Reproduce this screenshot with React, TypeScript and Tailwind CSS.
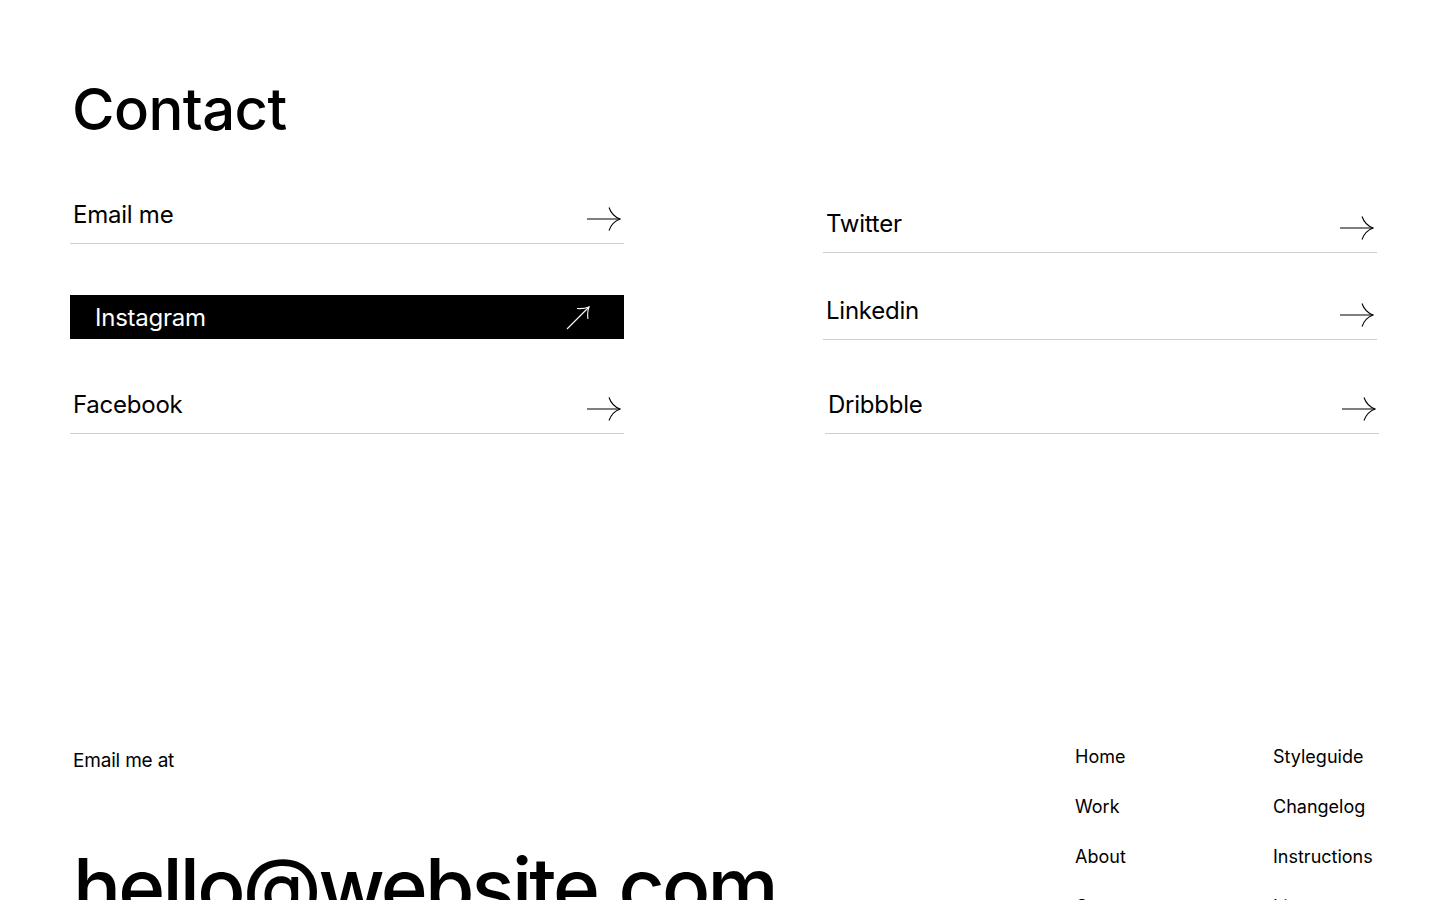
import React from 'react';

interface LinkRow {
  label: string;
  active?: boolean;
  className?: string;
}

const ArrowRight: React.FC<{ className?: string }> = ({ className }) => (
  <svg viewBox="0 0 34 26" width="34" height="26" fill="none" stroke="currentColor" strokeWidth="1.1" className={className}>
    <path d="M0 13 H33" />
    <path d="M22 1.5 Q25 10 33 13 Q25 16 22 24.5" />
  </svg>
);

const ArrowUpRight: React.FC<{ className?: string }> = ({ className }) => (
  <svg viewBox="0 0 26 26" width="26" height="26" fill="none" stroke="currentColor" strokeWidth="1.1" className={className}>
    <path d="M2 24 L24 2" />
    <path d="M12 3.5 Q19 4 24 2 Q22 7 23 14" />
  </svg>
);

const leftLinks: LinkRow[] = [
  { label: 'Email me' },
  { label: 'Instagram', active: true, className: 'mt-[51px]' },
  { label: 'Facebook', className: 'mt-[51px]' },
];

const rightLinks: LinkRow[] = [
  { label: 'Twitter' },
  { label: 'Linkedin', className: 'mt-[43px]' },
  { label: 'Dribbble', className: 'mt-[50px] translate-x-[2px]' },
];

const navLinks = [
  ['Home', 'Styleguide'],
  ['Work', 'Changelog'],
  ['About', 'Instructions'],
  ['Contact', 'Licenses'],
];

const ContactRow: React.FC<LinkRow> = ({ label, active, className = '' }) => {
  if (active) {
    return (
      <a
        href="#"
        className={`flex h-[44px] items-center justify-between bg-black pl-[25px] pr-[33px] pt-[2px] text-[24px] leading-[30px] tracking-[-0.01em] text-white ${className}`}
      >
        <span>{label}</span>
        <ArrowUpRight />
      </a>
    );
  }
  return (
    <a
      href="#"
      className={`flex h-[44px] items-start justify-between border-b border-[#cfcfcf] px-[3px] text-[24px] leading-[30px] tracking-[-0.01em] text-black ${className}`}
    >
      <span>{label}</span>
      <ArrowRight className="mt-[6px]" />
    </a>
  );
};

export default function App() {
  return (
    <div className="min-h-screen bg-white text-black" style={{ fontFamily: 'Inter, "Noto Sans", sans-serif' }}>
      <section className="pl-[70px] pr-[63px] pt-[80px]">
        <h1 className="pl-[2px] text-[58px] leading-none font-medium tracking-[-0.01em]">Contact</h1>

        <div className="mt-[62px] flex gap-[199px]">
          <div className="w-[554px]">
            {leftLinks.map((row) => (
              <ContactRow key={row.label} {...row} />
            ))}
          </div>
          <div className="w-[554px] pt-[9px]">
            {rightLinks.map((row) => (
              <ContactRow key={row.label} {...row} />
            ))}
          </div>
        </div>
      </section>

      <footer className="mt-[313px] flex items-start justify-between pl-[73px] pr-[61px]">
        <div>
          <p className="text-[19px] leading-[28px] tracking-[-0.01em]">Email me at</p>
          <a href="#" className="mt-[72px] block text-[80px] leading-none font-medium tracking-[-0.035em]">
            hello@website.com
          </a>
        </div>
        <nav className="-mt-[2px] grid w-[304px] grid-cols-[198px_1fr]">
          {navLinks.map(([a, b]) => (
            <React.Fragment key={a}>
              <a href="#" className="h-[50px] text-[18px] leading-[24px]">{a}</a>
              <a href="#" className="h-[50px] text-[18px] leading-[24px]">{b}</a>
            </React.Fragment>
          ))}
        </nav>
      </footer>
    </div>
  );
}
